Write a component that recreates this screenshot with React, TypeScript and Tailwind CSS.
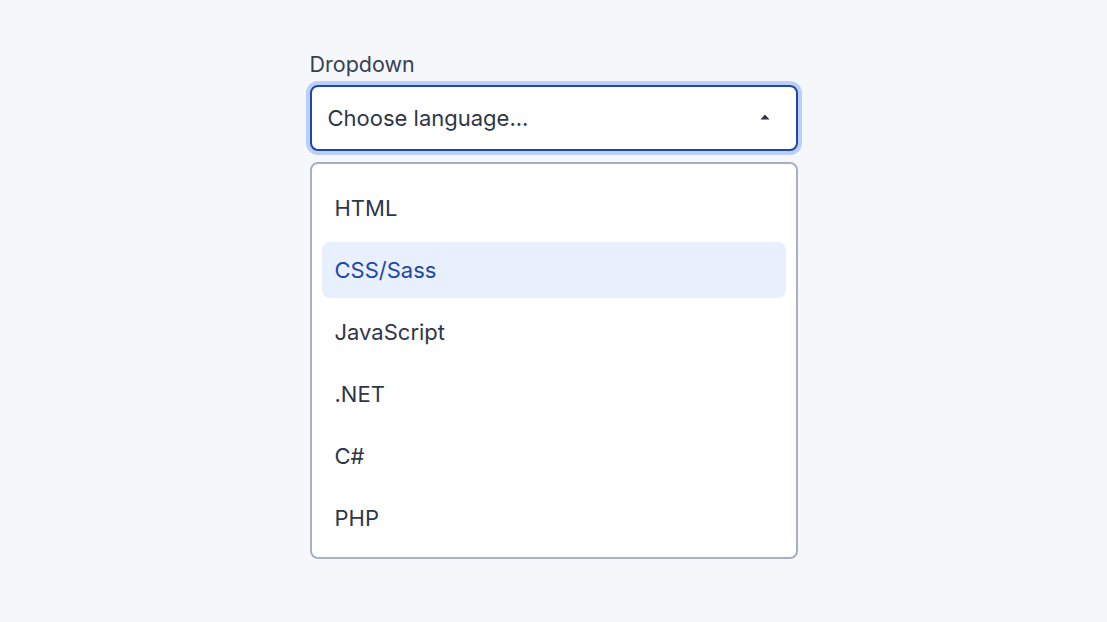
const LANGUAGES = ['HTML', 'CSS/Sass', 'JavaScript', '.NET', 'C#', 'PHP'];

export default function App() {
  const active = 'CSS/Sass';

  return (
    <div className="min-h-[622px] w-full bg-[#f5f7fa] font-['Inter','Noto_Sans',sans-serif] text-[#2f3747]">
      <div className="mx-auto w-[488px] pt-[50px]">
        <label className="mb-[7px] block text-[21.5px] leading-[28px] text-[#374151]">Dropdown</label>

        <button
          type="button"
          className="flex h-[66px] w-full items-center justify-between rounded-[8px] border-2 border-[#1e48a8] bg-white pl-[16px] pr-[26px] text-left text-[22px] text-[#2f3747] shadow-[0_0_0_4px_#bcd0f7] outline-none"
        >
          <span>Choose language...</span>
          <svg width="10" height="6" viewBox="0 0 10 6" className="mt-[-2px]">
            <path d="M5 0.5 L9.5 5.5 L0.5 5.5 Z" fill="#2f3747" />
          </svg>
        </button>

        <ul className="mt-[11px] flex flex-col gap-[6px] rounded-[8px] border-2 border-[#a9afc2] bg-white px-[10px] pt-[16px] pb-[11px]">
          {LANGUAGES.map((lang) => (
            <li
              key={lang}
              className={
                lang === active
                  ? 'flex h-[56px] items-center rounded-[8px] bg-[#e8effd] px-[13px] text-[22px] text-[#1e48a8]'
                  : 'flex h-[56px] items-center rounded-[8px] px-[13px] text-[22px] text-[#2f3747]'
              }
            >
              {lang}
            </li>
          ))}
        </ul>
      </div>
    </div>
  );
}
